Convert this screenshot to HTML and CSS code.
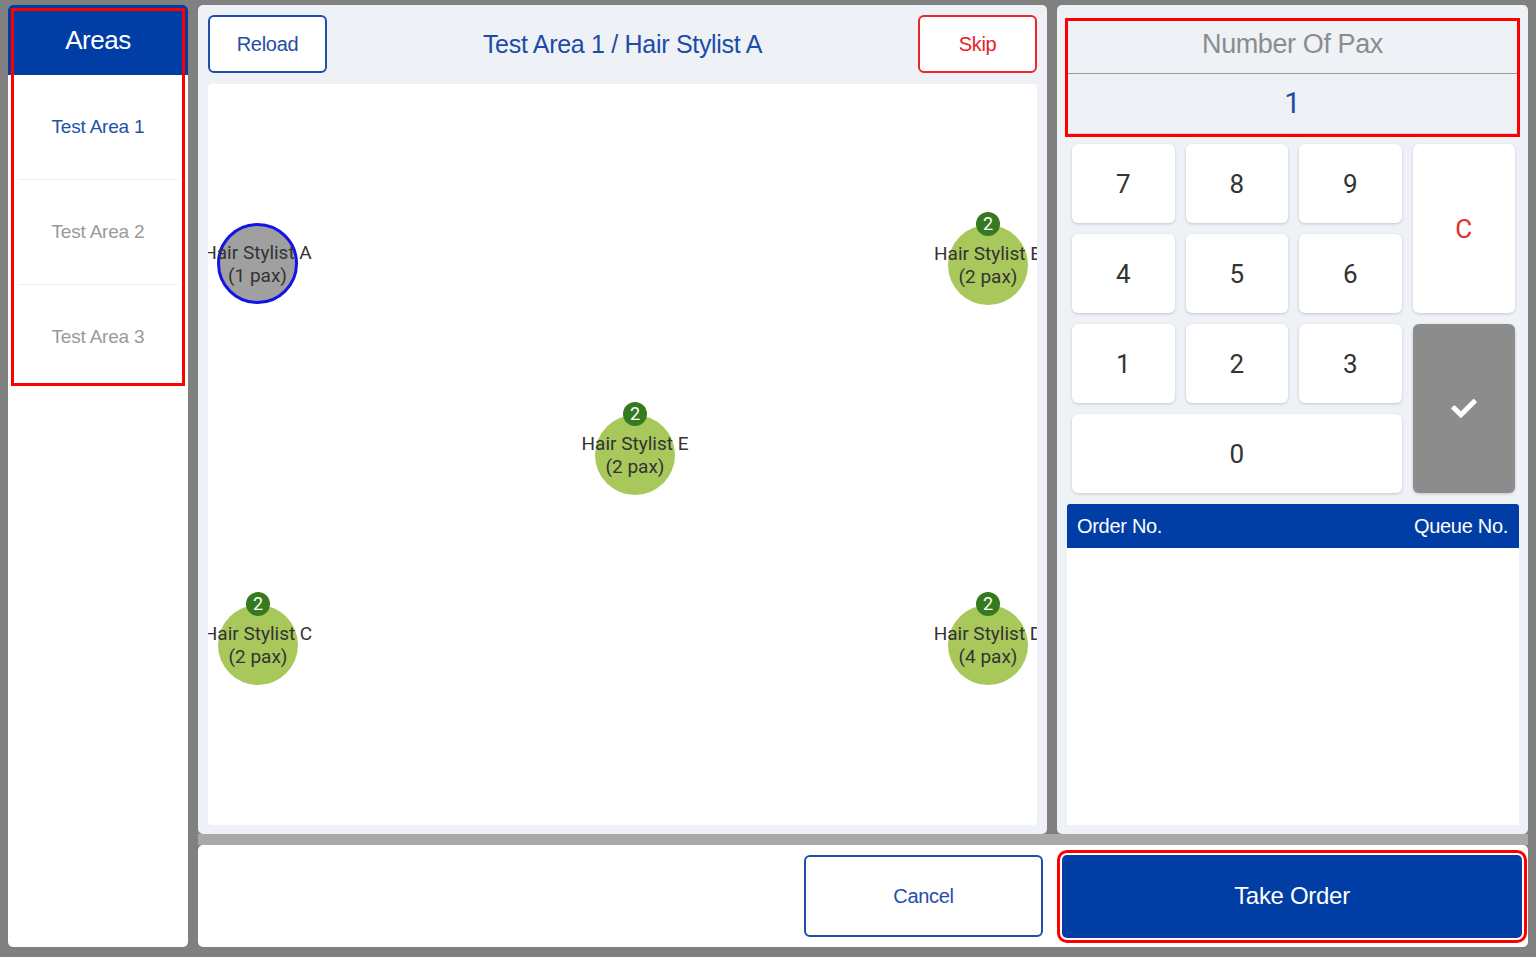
FILE: index.html
```html
<!DOCTYPE html>
<html lang="en">
<head>
    <meta charset="UTF-8">
    <meta name="viewport" content="width=device-width, initial-scale=1.0">
    <title>Take Order</title>
    <link rel="stylesheet" href="styles.css">
</head>
<body>

    <div class="app">
        <!-- Areas list -->
        <div class="left-panel">
            <div class="areas">
                <div class="areas-title">Areas</div>
                <div class="area-item active">Test Area 1</div>
                <div class="area-item">Test Area 2</div>
                <div class="area-item">Test Area 3</div>
            </div>
        </div>

        <div class="main">
            <div class="top-row">
                <!-- Floor plan -->
                <div class="floor-panel">
                    <div class="floor-header">
                        <button class="btn-outline">Reload</button>
                        <div class="floor-title">Test Area 1 / Hair Stylist A</div>
                        <button class="btn-outline red">Skip</button>
                    </div>
                    <div class="floor-canvas">
                        <div class="node selected" style="left: 49px; top: 179px;">
                            <div class="node-label">Hair Stylist A<br>(1 pax)</div>
                        </div>
                        <div class="node" style="left: 780px; top: 181px;">
                            <div class="badge">2</div>
                            <div class="node-label">Hair Stylist B<br>(2 pax)</div>
                        </div>
                        <div class="node" style="left: 427px; top: 371px;">
                            <div class="badge">2</div>
                            <div class="node-label">Hair Stylist E<br>(2 pax)</div>
                        </div>
                        <div class="node" style="left: 50px; top: 561px;">
                            <div class="badge">2</div>
                            <div class="node-label">Hair Stylist C<br>(2 pax)</div>
                        </div>
                        <div class="node" style="left: 780px; top: 561px;">
                            <div class="badge">2</div>
                            <div class="node-label">Hair Stylist D<br>(4 pax)</div>
                        </div>
                    </div>
                </div>

                <!-- Pax keypad + orders -->
                <div class="side-panel">
                    <div class="pax">
                        <div class="pax-label">Number Of Pax</div>
                        <div class="pax-value">1</div>
                    </div>
                    <div class="keypad">
                        <button class="key">7</button>
                        <button class="key">8</button>
                        <button class="key">9</button>
                        <button class="key key-clear">C</button>
                        <button class="key">4</button>
                        <button class="key">5</button>
                        <button class="key">6</button>
                        <button class="key">1</button>
                        <button class="key">2</button>
                        <button class="key">3</button>
                        <button class="key key-ok">
                            <svg width="26" height="19" viewBox="0 0 512 384">
                                <path fill="#fff" d="M173.9 375.4L7.5 209c-10-10-10-26.2 0-36.2l36.2-36.2c10-10 26.2-10 36.2 0L192 248.7 432.1 8.6c10-10 26.2-10 36.2 0l36.2 36.2c10 10 10 26.2 0 36.2L210.1 375.4c-10 10-26.2 10-36.2 0z"/>
                            </svg>
                        </button>
                        <button class="key key-zero">0</button>
                    </div>
                    <div class="order-head">
                        <span>Order No.</span>
                        <span>Queue No.</span>
                    </div>
                    <div class="order-list"></div>
                </div>
            </div>

            <div class="strip"></div>

            <div class="bottom-bar">
                <button class="btn-cancel">Cancel</button>
                <button class="btn-take">Take Order</button>
            </div>
        </div>
    </div>

</body>
</html>
```

FILE: styles.css
```css
body {
    margin: 0;
    background-color: #fff;
    font-family: 'Liberation Sans', Arial, sans-serif;
}

button {
    font-family: inherit;
    cursor: pointer;
}

.app {
    height: 957px;
    box-sizing: border-box;
    padding: 5px 8px 10px 8px;
    background-color: #808080;
    display: flex;
    gap: 10px;
}

/* Left areas list */
.left-panel {
    width: 180px;
    background-color: #fff;
    border-radius: 5px;
    overflow: hidden;
}

.areas {
    outline: 3px solid #f00;
    outline-offset: -6px;
}

.areas-title {
    height: 70px;
    background-color: #003da5;
    color: #fff;
    font-size: 26px;
    letter-spacing: -0.5px;
    display: flex;
    align-items: center;
    justify-content: center;
}

.area-item {
    height: 104px;
    margin: 0 10px;
    display: flex;
    align-items: center;
    justify-content: center;
    font-size: 19px;
    letter-spacing: -0.2px;
    color: #9a9a9a;
    border-top: 1px solid #f0f0f0;
}

.area-item.active {
    color: #2352a8;
    border-top: none;
}

/* Main column */
.main {
    flex: 1;
    display: flex;
    flex-direction: column;
}

.top-row {
    flex: 1;
    display: flex;
    gap: 10px;
}

.strip {
    height: 11px;
    background-color: #a9a9a9;
}

/* Floor plan */
.floor-panel {
    width: 849px;
    box-sizing: border-box;
    padding: 10px 10px 9px 10px;
    background-color: #eef1f5;
    border-radius: 5px;
    display: flex;
    flex-direction: column;
}

.floor-header {
    height: 58px;
    display: flex;
    align-items: center;
}

.btn-outline {
    width: 119px;
    height: 58px;
    background-color: #fff;
    border: 2px solid #1f4ea8;
    border-radius: 6px;
    color: #1f4ea8;
    font-size: 20px;
    letter-spacing: -0.3px;
}

.btn-outline.red {
    border-color: #e8262b;
    color: #e5202a;
}

.floor-title {
    flex: 1;
    text-align: center;
    font-size: 25px;
    letter-spacing: -0.3px;
    color: #1c4ca6;
}

.floor-canvas {
    flex: 1;
    margin-top: 11px;
    background-color: #fff;
    border-radius: 4px;
    position: relative;
    overflow: hidden;
}

.node {
    position: absolute;
    width: 80px;
    height: 80px;
    margin: -40px 0 0 -40px;
    border-radius: 50%;
    background-color: #a8c85c;
}

.node.selected {
    width: 81px;
    height: 81px;
    box-sizing: border-box;
    background-color: #a0a0a0;
    border: 3px solid #1414e6;
}

.node-label {
    position: absolute;
    left: 50%;
    top: 50%;
    transform: translate(-50%, -50%);
    white-space: nowrap;
    text-align: center;
    font-family: Roboto, sans-serif;
    font-size: 19px;
    line-height: 23px;
    color: #333;
}

.badge {
    position: absolute;
    left: 50%;
    top: -13px;
    width: 24px;
    height: 24px;
    margin-left: -12px;
    border-radius: 50%;
    background-color: #367a1f;
    color: #fff;
    font-family: Roboto, sans-serif;
    font-size: 18px;
    line-height: 24px;
    text-align: center;
}

/* Side panel */
.side-panel {
    flex: 1;
    box-sizing: border-box;
    padding: 16px 9px 9px 10px;
    background-color: #eef1f5;
    border-radius: 5px;
    display: flex;
    flex-direction: column;
}

.pax {
    margin: 0 2px 0 1px;
    outline: 3px solid #f00;
}

.pax-label {
    height: 53px;
    box-sizing: border-box;
    padding-bottom: 6px;
    border-bottom: 1px solid #9a9a9a;
    display: flex;
    align-items: center;
    justify-content: center;
    font-size: 27px;
    letter-spacing: -0.4px;
    color: #8c8c8c;
}

.pax-value {
    height: 60px;
    box-sizing: border-box;
    padding-bottom: 2px;
    border-bottom: 1px solid #d0d4da;
    display: flex;
    align-items: center;
    justify-content: center;
    font-family: Roboto, sans-serif;
    font-size: 29px;
    color: #1c4ca6;
}

.keypad {
    margin: 10px 4px 0 5px;
    display: grid;
    grid-template-columns: repeat(4, 1fr);
    grid-template-rows: repeat(4, 79px);
    gap: 11px;
}

.key {
    border: none;
    border-radius: 6px;
    background-color: #fff;
    box-shadow: 0 1px 3px rgba(0, 0, 0, 0.18);
    font-family: Roboto, sans-serif;
    font-size: 26px;
    color: #333;
    padding: 0;
}

.key-clear {
    grid-column: 4;
    grid-row: 1 / span 2;
    color: #e0302f;
}

.key-ok {
    grid-column: 4;
    grid-row: 3 / span 2;
    background-color: #8c8c8c;
    display: flex;
    align-items: center;
    justify-content: center;
}

.key-zero {
    grid-column: 1 / span 3;
    grid-row: 4;
}

.order-head {
    margin-top: 11px;
    height: 44px;
    padding: 0 11px 0 10px;
    background-color: #003da5;
    border-radius: 3px 3px 0 0;
    color: #fff;
    font-size: 20px;
    letter-spacing: -0.3px;
    display: flex;
    align-items: center;
    justify-content: space-between;
}

.order-list {
    flex: 1;
    background-color: #fff;
}

/* Bottom actions */
.bottom-bar {
    height: 102px;
    box-sizing: border-box;
    padding: 0 6px 0 0;
    background-color: #fff;
    border-radius: 5px;
    display: flex;
    align-items: center;
    justify-content: flex-end;
    gap: 19px;
}

.btn-cancel {
    width: 239px;
    height: 82px;
    background-color: #fff;
    border: 2px solid #1f4ea8;
    border-radius: 6px;
    color: #1f4ea8;
    font-size: 20px;
    letter-spacing: -0.3px;
}

.btn-take {
    width: 460px;
    height: 83px;
    background-color: #003da5;
    border: none;
    border-radius: 5px;
    color: #fff;
    font-size: 24px;
    letter-spacing: -0.3px;
    outline: 3px solid #f00;
    outline-offset: 2px;
}
```
